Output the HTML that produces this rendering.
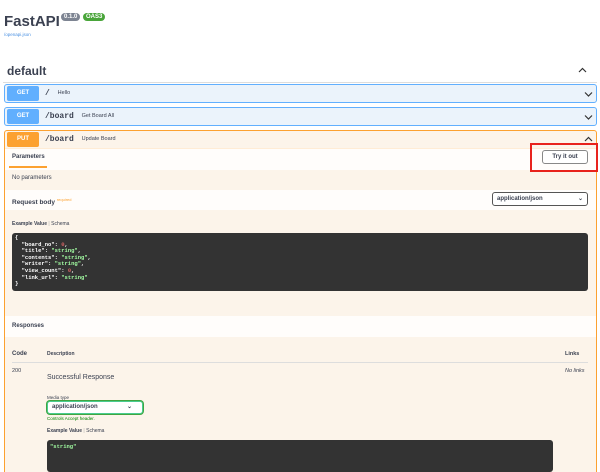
<!DOCTYPE html>
<html style="height:472px;overflow:hidden"><head><style>
*{box-sizing:border-box;margin:0;padding:0}
body{width:600px;height:472px;overflow:hidden;background:#fff;font-family:"Liberation Sans",sans-serif;color:#3b4151;position:relative}
.a{position:absolute}
.mono{font-family:"Liberation Mono",monospace}
.row{position:absolute;left:4px;width:593px;border-radius:3px}
.get{background:#ebf3fb;border:1px solid #61affe}
.btn{position:absolute;left:2px;top:1px;width:32px;height:15px;border-radius:2px;color:#fff;font-size:6px;font-weight:bold;text-align:center;line-height:15px}
.path{position:absolute;left:40px;top:0;line-height:17px;font-size:8px;font-weight:bold}
.sum{font-family:"Liberation Sans";font-weight:normal;font-size:5.5px;margin-left:3px;vertical-align:1px}
.chev{position:absolute;right:3px;width:9px;height:6px}
.band{position:absolute;left:5px;width:591px;background:rgba(255,255,255,.8)}
.code{background:#333;border-radius:3px;position:absolute}
.s{color:#a2fca2}.n{color:#d36363}
.sel{position:absolute;border-radius:3px;background:#fff;font-size:6px;font-weight:bold;padding:0 4px}
</style></head><body>
<div class="a" style="left:4px;top:13px;font-size:15px;font-weight:bold;color:#3b4151">FastAPI</div>
<div class="a" style="left:61px;top:13px;background:#7d8492;color:#fff;border-radius:6px;font-size:6px;font-weight:bold;padding:1px 3px">0.1.0</div>
<div class="a" style="left:83px;top:13px;color:#fff;border-radius:6px;font-size:6px;font-weight:bold;padding:1px 3px;background:#49a53a">OAS3</div>
<div class="a" style="left:4px;top:32px;font-size:4.5px;color:#4990e2">/openapi.json</div>
<div class="a" style="left:7px;top:64px;font-size:12px;font-weight:bold">default</div>
<svg class="a" style="left:578px;top:67px" width="9" height="6"><path d="M1 5 L4.5 1.5 L8 5" stroke="#333" fill="none" stroke-width="1.2"/></svg>
<div class="a" style="left:3px;top:82px;width:594px;height:1px;background:#ddd"></div>

<div class="row get" style="top:84px;height:19px"><div class="btn" style="background:#61affe">GET</div><div class="path mono">/ <span class="sum">Hello</span></div><svg class="chev" style="top:6px"><path d="M1 1.5 L4.5 5 L8 1.5" stroke="#333" fill="none" stroke-width="1.2"/></svg></div>
<div class="row get" style="top:107px;height:19px"><div class="btn" style="background:#61affe">GET</div><div class="path mono">/board <span class="sum">Get Board All</span></div><svg class="chev" style="top:6px"><path d="M1 1.5 L4.5 5 L8 1.5" stroke="#333" fill="none" stroke-width="1.2"/></svg></div>

<div class="row" style="top:130px;height:360px;background:#fcf4ea;border:1px solid #fca130">
<div class="btn" style="background:#fca130;top:1px">PUT</div><div class="path mono">/board <span class="sum">Update Board</span></div><svg class="chev" style="top:5px"><path d="M1 5 L4.5 1.5 L8 5" stroke="#333" fill="none" stroke-width="1.2"/></svg>
<div style="position:absolute;left:0;right:0;top:17px;height:1px;background:#fca130"></div>
</div>
<div class="band" style="top:148px;height:22px"></div>
<div class="a" style="left:12px;top:154px;font-size:6px;font-weight:bold">Parameters</div>
<div class="a" style="left:9px;top:166px;width:38px;height:2px;background:#fca130"></div>
<div class="a" style="left:530px;top:143px;width:68px;height:29px;border:2px solid #e8221c"></div>
<div class="a" style="left:542px;top:150px;width:46px;height:14px;border:1px solid #888;border-radius:3px;background:#fff;font-size:6px;font-weight:bold;text-align:center;line-height:12px">Try it out</div>
<div class="a" style="left:12px;top:175px;font-size:6px">No parameters</div>
<div class="band" style="top:190px;height:20px"></div>
<div class="a" style="left:12px;top:197px;font-size:6.5px;font-weight:bold">Request body <sup style="color:#fca130;font-size:4px;font-weight:normal">required</sup></div>
<div class="sel" style="left:492px;top:192px;width:96px;height:14px;border:1px solid #555;line-height:12px">application/json<span style="float:right">⌄</span></div>
<div class="a" style="left:12px;top:221px;font-size:5px"><b>Example Value</b> <span style="color:#aaa">|</span> Schema</div>
<div class="code mono" style="left:12px;top:233px;width:576px;height:58px;color:#fff;font-size:5.5px;line-height:6.6px;padding:2px 3px;font-weight:bold;white-space:pre">{
  "board_no": <span class="n">0</span>,
  "title": <span class="s">"string"</span>,
  "contents": <span class="s">"string"</span>,
  "writer": <span class="s">"string"</span>,
  "view_count": <span class="n">0</span>,
  "link_url": <span class="s">"string"</span>
}</div>
<div class="band" style="top:316px;height:21px"></div>
<div class="a" style="left:12px;top:323px;font-size:6px;font-weight:bold">Responses</div>
<div class="a" style="left:12px;top:351px;font-size:6px;font-weight:bold">Code</div>
<div class="a" style="left:47px;top:351px;font-size:5px;font-weight:bold">Description</div>
<div class="a" style="left:565px;top:351px;font-size:5.5px;font-weight:bold">Links</div>
<div class="a" style="left:12px;top:362px;width:576px;height:1px;background:#ddd"></div>
<div class="a" style="left:12px;top:368px;font-size:5.5px">200</div>
<div class="a" style="left:565px;top:368px;font-size:5.5px;font-style:italic">No links</div>
<div class="a" style="left:47px;top:374px;font-size:7px">Successful Response</div>
<div class="a" style="left:47px;top:395px;font-size:4.5px">Media type</div>
<div class="sel" style="left:47px;top:401px;width:96px;height:13px;border:1px solid #49cc90;line-height:11px;box-shadow:0 0 0 1px #41a541">application/json<span style="float:right;margin-right:6px">⌄</span></div>
<div class="a" style="left:47px;top:416px;font-size:4.5px;color:#008000">Controls Accept header.</div>
<div class="a" style="left:47px;top:428px;font-size:5px"><b>Example Value</b> <span style="color:#aaa">|</span> Schema</div>
<div class="code mono" style="left:47px;top:440px;width:506px;height:32px;color:#a2fca2;font-size:5.5px;padding:3px 3px;font-weight:bold">"string"</div>
</body></html>
